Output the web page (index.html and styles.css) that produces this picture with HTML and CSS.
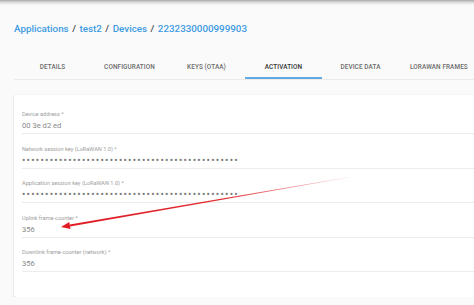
FILE: index.html
```html
<!DOCTYPE html>
<html>
<head>
<meta charset="utf-8">
<link rel="stylesheet" href="styles.css">
</head>
<body>
<div class="appbar-shadow"></div>
<main class="page">
  <nav class="crumbs">
    <a class="crumb">Applications</a><span class="sep">/</span><a class="crumb">test2</a><span class="sep">/</span><a class="crumb">Devices</a><span class="sep">/</span><a class="crumb">2232330000999903</a>
  </nav>
  <div class="tabs">
    <div class="tab">Details</div>
    <div class="tab">Configuration</div>
    <div class="tab">Keys (OTAA)</div>
    <div class="tab active">Activation</div>
    <div class="tab">Device data</div>
    <div class="tab">LoRaWAN frames</div>
  </div>
  <section class="card">
    <div class="field">
      <div class="label">Device address *</div>
      <div class="value">00 3e d2 ed</div>
    </div>
    <div class="field">
      <div class="label">Network session key (LoRaWAN 1.0) *</div>
      <div class="value dots">•••••••••••••••••••••••••••••••••••••••••••••••</div>
    </div>
    <div class="field">
      <div class="label">Application session key (LoRaWAN 1.0) *</div>
      <div class="value dots">•••••••••••••••••••••••••••••••••••••••••••••••</div>
    </div>
    <div class="field">
      <div class="label">Uplink frame-counter *</div>
      <div class="value">356</div>
    </div>
    <div class="field">
      <div class="label">Downlink frame-counter (network) *</div>
      <div class="value">356</div>
    </div>
  </section>
</main>
<svg class="arrow" width="474" height="305" viewBox="0 0 474 305">
  <defs>
    <linearGradient id="fade" gradientUnits="userSpaceOnUse" x1="61" y1="227" x2="350" y2="177">
      <stop offset="0" stop-color="#e11d24" stop-opacity="1"/>
      <stop offset="0.55" stop-color="#e11d24" stop-opacity="0.95"/>
      <stop offset="1" stop-color="#e11d24" stop-opacity="0.08"/>
    </linearGradient>
  </defs>
  <polygon fill="url(#fade)" points="70.04,226.46 350.05,177.3 349.95,176.7 69.7,224.49"/>
  <polygon fill="#e11d24" points="61,227 70.47,228.92 69.27,222.02"/>
</svg>
</body>
</html>
```
FILE: styles.css
```css
html, body {
  margin: 0;
  padding: 0;
}
body {
  width: 474px;
  height: 305px;
  overflow: hidden;
  background: #fafafa;
  font-family: Roboto, "Liberation Sans", sans-serif;
  position: relative;
}
.appbar-shadow {
  height: 5px;
  background: linear-gradient(to bottom, #a9a9a9 0%, #d9d9d9 45%, #fafafa 100%);
}
.page {
  padding-left: 14px;
  overflow: hidden;
}
.crumbs {
  margin-top: 18px;
  height: 12px;
  line-height: 12px;
  font-size: 9.8px;
  font-weight: 500;
  white-space: nowrap;
}
.crumb {
  color: #3d9be3;
}
.sep {
  color: #444;
  margin: 0 3.5px;
}
.tabs {
  margin-top: 20px;
  display: flex;
  height: 24px;
  border-bottom: 1px solid #ebebeb;
  overflow: hidden;
}
.tab {
  width: 77px;
  flex: none;
  display: flex;
  align-items: center;
  justify-content: center;
  font-size: 6.4px;
  font-weight: 500;
  letter-spacing: 0.1px;
  text-transform: uppercase;
  color: #6b6b6b;
  box-sizing: border-box;
  white-space: nowrap;
}
.tab:last-child {
  width: 75px;
  justify-content: flex-start;
  padding-left: 11px;
}
.tab.active {
  color: #333;
  border-bottom: 2px solid #63a8e0;
  padding-top: 2px;
}
.card {
  margin-top: 15px;
  height: 202px;
  box-sizing: border-box;
  background: #fff;
  padding: 15px 0 0 8px;
  display: flex;
  flex-direction: column;
  gap: 10.5px;
  box-shadow: 0 1px 2px rgba(0,0,0,0.18), 0 0 1px rgba(0,0,0,0.12);
  border-radius: 2px 0 0 2px;
}
.field {
  border-bottom: 1px solid #ececec;
  padding-bottom: 1px;
}
.label {
  height: 8px;
  line-height: 8px;
  font-size: 5.6px;
  color: #9e9e9e;
  white-space: nowrap;
}
.value {
  margin-top: 2px;
  height: 12px;
  line-height: 12px;
  font-size: 7.6px;
  color: #8a8a8a;
  white-space: nowrap;
}
.value.dots {
  font-size: 10px;
  letter-spacing: 1.24px;
  color: #7a7a7a;
}
.arrow {
  position: absolute;
  left: 0;
  top: 0;
  pointer-events: none;
}
```
